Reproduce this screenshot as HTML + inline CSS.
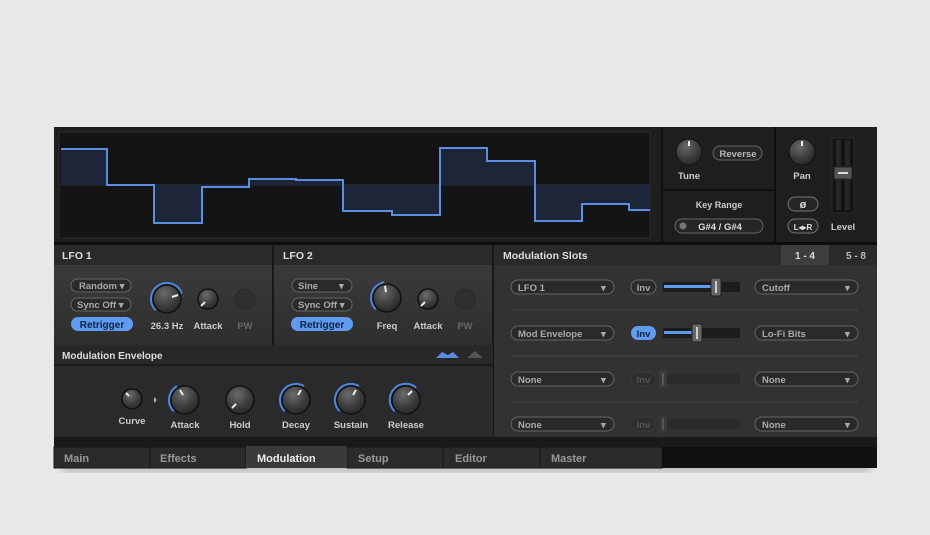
<!DOCTYPE html><html><head><style>
body{margin:0;background:#e8e8e8;width:930px;height:530px;overflow:hidden}
svg text{font-family:"Liberation Sans",sans-serif;font-weight:bold}
</style></head><body>
<svg width="930" height="530" viewBox="0 0 930 530" xmlns="http://www.w3.org/2000/svg">
<defs>
<radialGradient id="kn" cx="0.4" cy="0.3" r="0.8"><stop offset="0" stop-color="#6a6a6a"/><stop offset="0.6" stop-color="#3a3a3a"/><stop offset="1" stop-color="#222"/></radialGradient>
<linearGradient id="pg" x1="0" y1="0" x2="0" y2="1"><stop offset="0" stop-color="#3a3a3a"/><stop offset="1" stop-color="#2e2e2e"/></linearGradient>
<filter id="sh"><feGaussianBlur stdDeviation="4"/></filter>
</defs>
<rect x="62" y="462" width="808" height="10" fill="#999" filter="url(#sh)" opacity="0.6"/>
<rect x="54" y="127" width="823" height="341" fill="#1c1c1c"/>
<rect x="54" y="127" width="823" height="116" fill="#1e1e1e"/>
<rect x="59" y="132" width="591" height="106" fill="#141414" stroke="#2c2c2c"/>
<line x1="60" y1="185" x2="650" y2="185" stroke="#2a2f3a"/>
<path d="M61 149H107V185H61Z M107 185H154V223H202V185Z M202 187H249V185H202Z M249 185V179H296V180H343V185Z M343 185V211H392V215H440V185Z M440 185V148H487V161H535V185Z M535 185V221H582V204H629V210H650V185Z" fill="#1d2638"/>
<path d="M61 149H107V185H154V223H202V187H249V179H296V180H343V211H392V215H440V148H487V161H535V221H582V204H629V210H650" fill="none" stroke="#5b8ee0" stroke-width="2"/>
<line x1="662" y1="127" x2="662" y2="243" stroke="#0e0e0e" stroke-width="2"/>
<line x1="775" y1="127" x2="775" y2="243" stroke="#0e0e0e" stroke-width="2"/>
<line x1="662" y1="190" x2="775" y2="190" stroke="#0e0e0e" stroke-width="2"/>
<rect x="54" y="242" width="823" height="3" fill="#0d0d0d"/>
<circle cx="689" cy="152" r="13" fill="url(#kn)" stroke="#111"/><line x1="689" y1="146" x2="689" y2="141" stroke="#eee" stroke-width="2"/>
<text x="689" y="179" fill="#ccc" font-size="9.5" text-anchor="middle">Tune</text>
<rect x="713" y="146" width="49" height="14" rx="7" fill="#262626" stroke="#666"/><text x="738" y="157" fill="#bbb" font-size="9.5" text-anchor="middle">Reverse</text>
<text x="719" y="208" fill="#ccc" font-size="9" text-anchor="middle">Key Range</text>
<rect x="675" y="219" width="88" height="14" rx="7" fill="#262626" stroke="#666"/><circle cx="683" cy="226" r="3.5" fill="#777"/><text x="720" y="230" fill="#ddd" font-size="9.5" text-anchor="middle">G#4  /  G#4</text>
<circle cx="802" cy="152" r="13" fill="url(#kn)" stroke="#111"/><line x1="802" y1="146" x2="802" y2="141" stroke="#eee" stroke-width="2"/>
<text x="802" y="179" fill="#ccc" font-size="9.5" text-anchor="middle">Pan</text>
<rect x="788" y="197" width="30" height="14" rx="7" fill="#262626" stroke="#777"/><text x="803" y="208" fill="#ddd" font-size="11" text-anchor="middle">ø</text>
<rect x="788" y="219" width="30" height="14" rx="7" fill="#262626" stroke="#777"/><text x="803" y="230" fill="#ddd" font-size="8" text-anchor="middle">L◂▸R</text>
<rect x="832" y="138" width="22" height="75" fill="#141414" stroke="#2a2a2a"/>
<rect x="836" y="140" width="5" height="70" fill="#262626"/><rect x="845" y="140" width="5" height="70" fill="#262626"/>
<rect x="834" y="167" width="18" height="12" fill="#555" stroke="#222"/><line x1="838" y1="173" x2="848" y2="173" stroke="#ddd" stroke-width="2"/>
<text x="843" y="230" fill="#ccc" font-size="9.5" text-anchor="middle">Level</text>
<rect x="54" y="245" width="823" height="20" fill="#2a2a2a"/>
<rect x="781" y="245" width="48" height="20" fill="#3d3d3d"/>
<text x="62" y="259" fill="#ddd" font-size="10.5">LFO 1</text>
<text x="283" y="259" fill="#ddd" font-size="10.5">LFO 2</text>
<text x="503" y="259" fill="#ddd" font-size="10.5">Modulation Slots</text>
<text x="805" y="259" fill="#ddd" font-size="10" text-anchor="middle">1 - 4</text>
<text x="856" y="259" fill="#bbb" font-size="10" text-anchor="middle">5 - 8</text>
<rect x="54" y="265" width="438" height="80" fill="url(#pg)"/>
<rect x="494" y="265" width="383" height="172" fill="#323232"/>
<line x1="273" y1="245" x2="273" y2="345" stroke="#181818" stroke-width="2"/>
<line x1="493" y1="245" x2="493" y2="437" stroke="#171717" stroke-width="2"/>
<g font-size="9.5" fill="#aaa">
<rect x="71" y="279" width="60" height="13" rx="6.5" fill="#2a2a2a" stroke="#666"/><text x="79" y="289">Random ▾</text>
<rect x="71" y="298" width="60" height="13" rx="6.5" fill="#2a2a2a" stroke="#666"/><text x="77" y="308">Sync Off ▾</text>
<rect x="292" y="279" width="60" height="13" rx="6.5" fill="#2a2a2a" stroke="#666"/><text x="298" y="289">Sine</text><text x="339" y="289">▾</text>
<rect x="292" y="298" width="60" height="13" rx="6.5" fill="#2a2a2a" stroke="#666"/><text x="298" y="308">Sync Off ▾</text>
</g>
<rect x="71" y="317" width="62" height="14" rx="7" fill="#5f9bf0"/><text x="102" y="328" fill="#10203a" font-size="10" text-anchor="middle">Retrigger</text>
<rect x="291" y="317" width="62" height="14" rx="7" fill="#5f9bf0"/><text x="322" y="328" fill="#10203a" font-size="10" text-anchor="middle">Retrigger</text>
<path d="M155.7 310.3A16 16 0 1 1 182 293.5" fill="none" stroke="#4d86e0" stroke-width="2"/>
<circle cx="167" cy="299" r="14" fill="url(#kn)" stroke="#111" stroke-width="1.5"/><line x1="172" y1="297" x2="178" y2="295" stroke="#eee" stroke-width="2"/>
<text x="167" y="329" fill="#ccc" font-size="9.5" text-anchor="middle">26.3 Hz</text>
<circle cx="208" cy="299" r="10" fill="url(#kn)" stroke="#111" stroke-width="1.5"/><line x1="205" y1="302" x2="201" y2="306" stroke="#eee" stroke-width="2"/>
<text x="208" y="329" fill="#ccc" font-size="9.5" text-anchor="middle">Attack</text>
<circle cx="245" cy="299" r="10" fill="#2f2f2f" stroke="#282828"/><text x="245" y="329" fill="#666" font-size="9.5" text-anchor="middle">PW</text>
<path d="M375.7 309.3A16 16 0 0 1 384.2 282.2" fill="none" stroke="#4d86e0" stroke-width="2"/>
<circle cx="387" cy="298" r="14" fill="url(#kn)" stroke="#111" stroke-width="1.5"/><line x1="386" y1="292" x2="385" y2="286" stroke="#eee" stroke-width="2"/>
<text x="387" y="329" fill="#ccc" font-size="9.5" text-anchor="middle">Freq</text>
<circle cx="428" cy="299" r="10" fill="url(#kn)" stroke="#111" stroke-width="1.5"/><line x1="425" y1="302" x2="421" y2="306" stroke="#eee" stroke-width="2"/>
<text x="428" y="329" fill="#ccc" font-size="9.5" text-anchor="middle">Attack</text>
<circle cx="465" cy="299" r="10" fill="#2f2f2f" stroke="#282828"/><text x="465" y="329" fill="#666" font-size="9.5" text-anchor="middle">PW</text>
<rect x="54" y="345" width="439" height="20" fill="#282828"/>
<line x1="54" y1="365" x2="493" y2="365" stroke="#151515"/>
<text x="62" y="359" fill="#ddd" font-size="10">Modulation Envelope</text>
<path d="M436 358L442 352L448 355L453 352L459 358Z" fill="#5b8ee0"/><path d="M467 358L475 351L483 358Z" fill="#555"/>
<rect x="54" y="366" width="439" height="71" fill="#2a2a2a"/>
<circle cx="132" cy="399" r="10" fill="url(#kn)" stroke="#111" stroke-width="1.5"/><line x1="129" y1="396" x2="126" y2="393" stroke="#eee" stroke-width="2"/>
<text x="132" y="424" fill="#ccc" font-size="9.5" text-anchor="middle">Curve</text>
<path d="M154 397L157 400L154 403Z" fill="#aaa"/>
<g fill="#ccc" font-size="9.5" text-anchor="middle">
<path d="M173.7 411.3A16 16 0 0 1 177 386.1" fill="none" stroke="#4d86e0" stroke-width="2"/>
<circle cx="185" cy="400" r="14" fill="url(#kn)" stroke="#111" stroke-width="1.5"/><line x1="183" y1="395" x2="180" y2="390" stroke="#eee" stroke-width="2"/><text x="185" y="428">Attack</text>
<circle cx="240" cy="400" r="14" fill="url(#kn)" stroke="#111" stroke-width="1.5"/><line x1="236" y1="404" x2="232" y2="408" stroke="#eee" stroke-width="2"/><text x="240" y="428">Hold</text>
<path d="M284.7 411.3A16 16 0 0 1 304 386.1" fill="none" stroke="#4d86e0" stroke-width="2"/>
<circle cx="296" cy="400" r="14" fill="url(#kn)" stroke="#111" stroke-width="1.5"/><line x1="298" y1="395" x2="301" y2="390" stroke="#eee" stroke-width="2"/><text x="296" y="428">Decay</text>
<path d="M339.7 411.3A16 16 0 0 1 359 386.1" fill="none" stroke="#4d86e0" stroke-width="2"/>
<circle cx="351" cy="400" r="14" fill="url(#kn)" stroke="#111" stroke-width="1.5"/><line x1="353" y1="395" x2="356" y2="390" stroke="#eee" stroke-width="2"/><text x="351" y="428">Sustain</text>
<path d="M394.7 411.3A16 16 0 0 1 416.3 387.7" fill="none" stroke="#4d86e0" stroke-width="2"/>
<circle cx="406" cy="400" r="14" fill="url(#kn)" stroke="#111" stroke-width="1.5"/><line x1="408" y1="395" x2="412" y2="391" stroke="#eee" stroke-width="2"/><text x="406" y="428">Release</text>
</g>
<g stroke="#464646"><line x1="513" y1="310" x2="858" y2="310"/><line x1="513" y1="356" x2="858" y2="356"/><line x1="513" y1="402" x2="858" y2="402"/></g>
<g font-size="9.5" fill="#aaa">
<rect x="511" y="280" width="103" height="14" rx="7" fill="#2a2a2a" stroke="#666"/><text x="518" y="291">LFO 1</text><text x="601" y="291">▾</text>
<rect x="755" y="280" width="103" height="14" rx="7" fill="#2a2a2a" stroke="#666"/><text x="762" y="291">Cutoff</text><text x="845" y="291">▾</text>
<rect x="511" y="326" width="103" height="14" rx="7" fill="#2a2a2a" stroke="#666"/><text x="518" y="337">Mod Envelope</text><text x="601" y="337">▾</text>
<rect x="755" y="326" width="103" height="14" rx="7" fill="#2a2a2a" stroke="#666"/><text x="762" y="337">Lo-Fi Bits</text><text x="845" y="337">▾</text>
<rect x="511" y="372" width="103" height="14" rx="7" fill="#2a2a2a" stroke="#666"/><text x="518" y="383">None</text><text x="601" y="383">▾</text>
<rect x="755" y="372" width="103" height="14" rx="7" fill="#2a2a2a" stroke="#666"/><text x="762" y="383">None</text><text x="845" y="383">▾</text>
<rect x="511" y="417" width="103" height="14" rx="7" fill="#2a2a2a" stroke="#666"/><text x="518" y="428">None</text><text x="601" y="428">▾</text>
<rect x="755" y="417" width="103" height="14" rx="7" fill="#2a2a2a" stroke="#666"/><text x="762" y="428">None</text><text x="845" y="428">▾</text>
<rect x="631" y="280" width="25" height="14" rx="7" fill="#2a2a2a" stroke="#666"/><text x="643.5" y="291" text-anchor="middle">Inv</text>
<rect x="631" y="326" width="25" height="14" rx="7" fill="#5f9bf0"/><text x="643.5" y="337" text-anchor="middle" fill="#10203a">Inv</text>
<rect x="631" y="372" width="25" height="14" rx="7" fill="#2e2e2e" stroke="#3a3a3a"/><text x="643.5" y="383" text-anchor="middle" fill="#555">Inv</text>
<rect x="631" y="417" width="25" height="14" rx="7" fill="#2e2e2e" stroke="#3a3a3a"/><text x="643.5" y="428" text-anchor="middle" fill="#555">Inv</text>
</g>
<rect x="663" y="282" width="77" height="10" fill="#1c1c1c"/><rect x="664" y="285" width="50" height="3" fill="#5f9bf0"/><rect x="711" y="278" width="10" height="18" rx="2" fill="#666" stroke="#222"/><line x1="716" y1="281" x2="716" y2="293" stroke="#eee" stroke-width="1.5"/>
<rect x="663" y="328" width="77" height="10" fill="#1c1c1c"/><rect x="664" y="331" width="30" height="3" fill="#5f9bf0"/><rect x="692" y="324" width="10" height="18" rx="2" fill="#666" stroke="#222"/><line x1="697" y1="327" x2="697" y2="339" stroke="#eee" stroke-width="1.5"/>
<rect x="663" y="374" width="77" height="10" fill="#2b2b2b"/><rect x="659" y="370" width="8" height="18" rx="2" fill="#3a3a3a"/><line x1="663" y1="373" x2="663" y2="385" stroke="#777"/>
<rect x="663" y="419" width="77" height="10" fill="#2b2b2b"/><rect x="659" y="415" width="8" height="18" rx="2" fill="#3a3a3a"/><line x1="663" y1="418" x2="663" y2="430" stroke="#777"/>
<rect x="54" y="437" width="823" height="10" fill="#1a1a1a"/>
<rect x="54" y="447" width="823" height="21" fill="#111"/>
<g fill="#2b2b2b" stroke="#161616"><rect x="54" y="447" width="96" height="21"/><rect x="150" y="447" width="96" height="21"/><rect x="347" y="447" width="96" height="21"/><rect x="443" y="447" width="97" height="21"/><rect x="540" y="447" width="122" height="21"/></g>
<rect x="246" y="446" width="101" height="22" fill="#3a3a3a"/>
<g font-size="11" fill="#999"><text x="64" y="462" font-weight="normal">Main</text><text x="160" y="462" font-weight="normal">Effects</text><text x="257" y="462" fill="#eee">Modulation</text><text x="358" y="462" font-weight="normal">Setup</text><text x="455" y="462" font-weight="normal">Editor</text><text x="551" y="462" font-weight="normal">Master</text></g>
</svg>
</body></html>
